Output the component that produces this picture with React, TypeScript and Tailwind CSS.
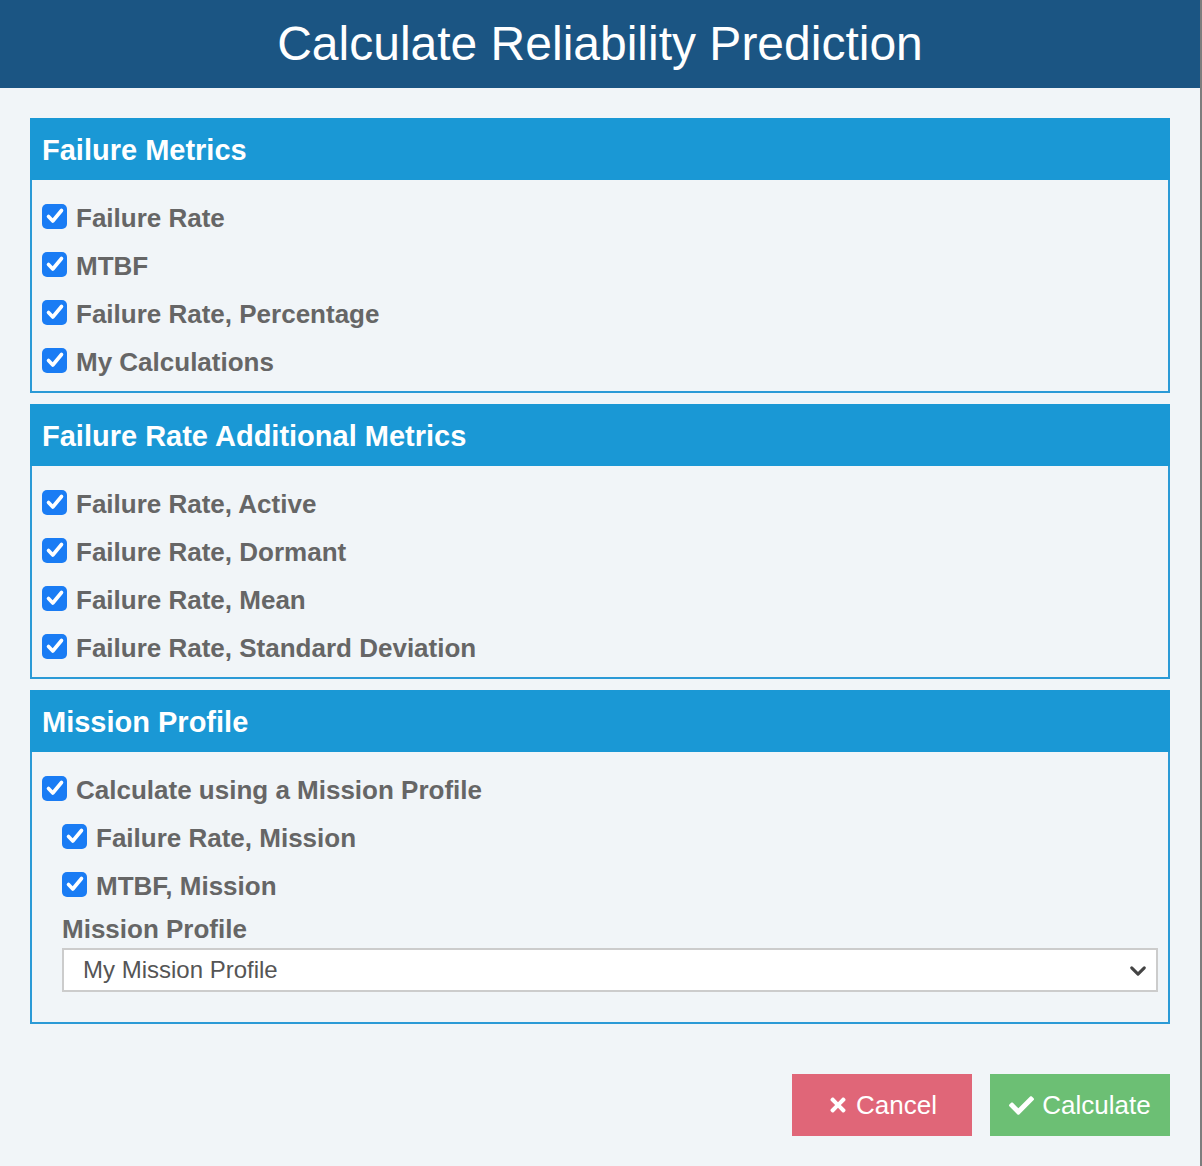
import React, { useState } from 'react';
import { FaTimes, FaCheck } from 'react-icons/fa';

// --- Config ---
const sections = [
  {
    title: 'Failure Metrics',
    items: ['Failure Rate', 'MTBF', 'Failure Rate, Percentage', 'My Calculations'],
  },
  {
    title: 'Failure Rate Additional Metrics',
    items: ['Failure Rate, Active', 'Failure Rate, Dormant', 'Failure Rate, Mean', 'Failure Rate, Standard Deviation'],
  },
];

// --- Helper Components ---
const CheckRow = ({ label, checked, onToggle, indent = false }) => (
  <label className={`flex items-center h-12 cursor-pointer ${indent ? 'pl-[20px]' : ''}`}>
    <span
      onClick={onToggle}
      className={`w-[25px] h-[25px] -mt-[4px] rounded-[5px] flex items-center justify-center shrink-0 ${
        checked ? 'bg-[#1a7cf4]' : 'bg-white border-2 border-[#999]'
      }`}
    >
      {checked && (
        <svg viewBox="0 0 24 24" className="w-[24px] h-[24px]">
          <path d="M5.5 12.5l4.3 4.5L18.5 6.5" fill="none" stroke="white" strokeWidth="3.6" strokeLinecap="round" strokeLinejoin="round" />
        </svg>
      )}
    </span>
    <span className="ml-[9px] text-[26px] font-bold text-[#666] leading-none">{label}</span>
  </label>
);

const Panel = ({ title, children, className = '' }) => (
  <div className="border-2 border-[#2b9ad6] bg-[#f1f5f8]">
    <div className="-mx-[2px] -mt-[2px] h-[62px] bg-[#1a98d5] flex items-center px-[12px]">
      <h2 className="text-[29px] font-bold text-white leading-none mt-[2px]">{title}</h2>
    </div>
    <div className={`px-[10px] pt-[14px] ${className}`}>{children}</div>
  </div>
);

const App = () => {
  const [checks, setChecks] = useState<Record<string, boolean>>({});
  const isOn = (k: string) => checks[k] !== false;
  const toggle = (k: string) => setChecks((c) => ({ ...c, [k]: !isOn(k) }));

  return (
    <div className="flex min-h-[1166px] w-[1202px]" style={{ fontFamily: '"Liberation Sans", Arial, sans-serif' }}>
      <div className="w-[1200px] bg-[#f1f5f8] flex flex-col">
        {/* --- HEADER --- */}
        <div className="h-[88px] bg-[#1b5583] flex items-center justify-center">
          <h1 className="text-[48px] text-white leading-none">Calculate Reliability Prediction</h1>
        </div>

        {/* --- BODY --- */}
        <div className="px-[30px] pt-[30px] flex flex-col gap-[11px]">
          {sections.map((s) => (
            <Panel key={s.title} title={s.title} className="pb-[5px]">
              {s.items.map((it) => (
                <CheckRow key={it} label={it} checked={isOn(it)} onToggle={() => toggle(it)} />
              ))}
            </Panel>
          ))}

          <Panel title="Mission Profile" className="pb-[30px]">
            <CheckRow label="Calculate using a Mission Profile" checked={isOn('mp')} onToggle={() => toggle('mp')} />
            <CheckRow indent label="Failure Rate, Mission" checked={isOn('frm')} onToggle={() => toggle('frm')} />
            <CheckRow indent label="MTBF, Mission" checked={isOn('mtbfm')} onToggle={() => toggle('mtbfm')} />
            <div className="pl-[20px]">
              <div className="h-[38px] flex items-center">
                <span className="text-[26px] font-bold text-[#666] leading-none">Mission Profile</span>
              </div>
              <div className="h-[44px] bg-white border-2 border-[#cccccc] flex items-center justify-between pl-[19px] pr-[9px]">
                <span className="text-[24px] text-[#555] leading-none">My Mission Profile</span>
                <svg viewBox="0 0 20 14" className="w-[18px] h-[13px]">
                  <path d="M3 4l7 7 7-7" fill="none" stroke="#444" strokeWidth="3.4" strokeLinecap="round" strokeLinejoin="round" />
                </svg>
              </div>
            </div>
          </Panel>

          {/* --- ACTIONS --- */}
          <div className="flex justify-end gap-[18px] mt-[39px]">
            <button className="w-[180px] h-[62px] bg-[#e06678] text-white flex items-center justify-center gap-[7px]">
              <FaTimes className="w-[22px] h-[22px]" />
              <span className="text-[26px] leading-none">Cancel</span>
            </button>
            <button className="w-[180px] h-[62px] bg-[#6cbf74] text-white flex items-center justify-center gap-[8px]">
              <FaCheck className="w-[25px] h-[25px]" />
              <span className="text-[26px] leading-none">Calculate</span>
            </button>
          </div>
        </div>
      </div>
      <div className="w-[2px] bg-[#7d7d7d]" />
    </div>
  );
};

export default App;
